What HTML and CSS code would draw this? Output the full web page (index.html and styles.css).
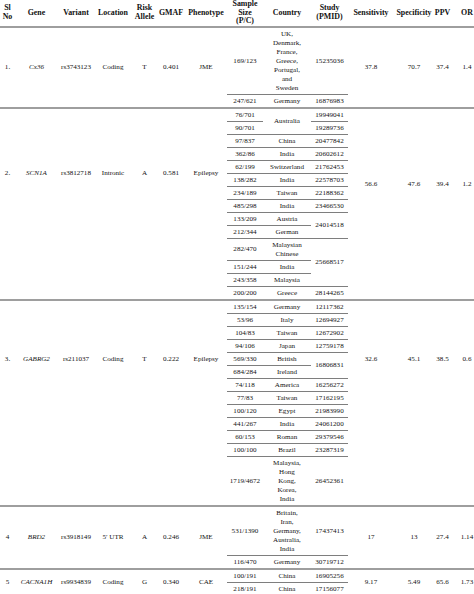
FILE: index.html
```html
<!DOCTYPE html>
<html>
<head>
<meta charset="utf-8">
<title>Table</title>
<link rel="stylesheet" href="styles.css">
</head>
<body>
<table class="t">
<colgroup>
<col class="c-sl"><col class="c-gene"><col class="c-var"><col class="c-loc"><col class="c-risk"><col class="c-gmaf"><col class="c-phen"><col class="c-samp"><col class="c-cty"><col class="c-study"><col class="c-sens"><col class="c-spec"><col class="c-ppv"><col class="c-or">
</colgroup>
<thead>
<tr>
<th>Sl<br>No</th><th>Gene</th><th>Variant</th><th>Location</th><th>Risk<br>Allele</th><th>GMAF</th><th>Phenotype</th><th>Sample<br>Size<br>(P/C)</th><th>Country</th><th>Study<br>(PMID)</th><th>Sensitivity</th><th>Specificity</th><th>PPV</th><th>OR</th>
</tr>
</thead>
<tbody>
<tr>
<td rowspan="2">1.</td><td rowspan="2" class="g">Cx36</td><td rowspan="2">rs3743123</td><td rowspan="2">Coding</td><td rowspan="2">T</td><td rowspan="2">0.401</td><td rowspan="2">JME</td>
<td class="s">169/123</td><td class="s">UK,<br>Denmark,<br>France,<br>Greece,<br>Portugal,<br>and<br>Sweden</td><td class="s">15235036</td>
<td rowspan="2">37.8</td><td rowspan="2">70.7</td><td rowspan="2">37.4</td><td rowspan="2">1.4</td>
</tr>
<tr><td class="s">247/621</td><td class="s">Germany</td><td class="s">16876983</td></tr>
</tbody>
<tbody>
<tr>
<td rowspan="10">2.</td><td rowspan="10" class="g">SCN1A</td><td rowspan="10">rs3812718</td><td rowspan="10">Intronic</td><td rowspan="10">A</td><td rowspan="10">0.581</td><td rowspan="10">Epilepsy</td>
<td class="s">76/701</td><td class="s" rowspan="2">Australia</td><td class="s">19949041</td>
<td rowspan="11">56.6</td><td rowspan="11">47.6</td><td rowspan="11">39.4</td><td rowspan="11">1.2</td>
</tr>
<tr><td class="s">90/701</td><td class="s">19289736</td></tr>
<tr><td class="s">97/837</td><td class="s">China</td><td class="s">20477842</td></tr>
<tr><td class="s">362/86</td><td class="s">India</td><td class="s">20602612</td></tr>
<tr><td class="s">62/199</td><td class="s">Switzerland</td><td class="s">21762453</td></tr>
<tr><td class="s">138/282</td><td class="s">India</td><td class="s">22578703</td></tr>
<tr><td class="s">234/189</td><td class="s">Taiwan</td><td class="s">22188362</td></tr>
<tr><td class="s">485/298</td><td class="s">India</td><td class="s">23466530</td></tr>
<tr><td class="s">133/209</td><td class="s">Austria</td><td class="s" rowspan="2">24014518</td></tr>
<tr><td class="s">212/344</td><td class="s">German</td></tr>
<tr><td colspan="7" rowspan="4"></td><td class="s">282/470</td><td class="s">Malaysian<br>Chinese</td><td class="s" rowspan="3">25668517</td></tr>
<tr><td class="s">151/244</td><td class="s">India</td><td colspan="4" rowspan="3"></td></tr>
<tr><td class="s">243/358</td><td class="s">Malaysia</td></tr>
<tr><td class="s">200/200</td><td class="s">Greece</td><td class="s">28144265</td></tr>
</tbody>
<tbody>
<tr>
<td rowspan="9">3.</td><td rowspan="9" class="g">GABRG2</td><td rowspan="9">rs211037</td><td rowspan="9">Coding</td><td rowspan="9">T</td><td rowspan="9">0.222</td><td rowspan="9">Epilepsy</td>
<td class="s">135/154</td><td class="s">Germany</td><td class="s">12117362</td>
<td rowspan="9">32.6</td><td rowspan="9">45.1</td><td rowspan="9">38.5</td><td rowspan="9">0.6</td>
</tr>
<tr><td class="s">53/96</td><td class="s">Italy</td><td class="s">12694927</td></tr>
<tr><td class="s">104/83</td><td class="s">Taiwan</td><td class="s">12672902</td></tr>
<tr><td class="s">94/106</td><td class="s">Japan</td><td class="s">12759178</td></tr>
<tr><td class="s">569/330</td><td class="s">British</td><td class="s" rowspan="2">16806831</td></tr>
<tr><td class="s">684/284</td><td class="s">Ireland</td></tr>
<tr><td class="s">74/118</td><td class="s">America</td><td class="s">16256272</td></tr>
<tr><td class="s">77/83</td><td class="s">Taiwan</td><td class="s">17162195</td></tr>
<tr><td class="s">100/120</td><td class="s">Egypt</td><td class="s">21983990</td></tr>
<tr><td colspan="7" rowspan="4"></td><td class="s">441/267</td><td class="s">India</td><td class="s">24061200</td><td colspan="4" rowspan="4"></td></tr>
<tr><td class="s">60/153</td><td class="s">Roman</td><td class="s">29379546</td></tr>
<tr><td class="s">100/100</td><td class="s">Brazil</td><td class="s">23287319</td></tr>
<tr><td class="s">1719/4672</td><td class="s">Malaysia,<br>Hong<br>Kong,<br>Korea,<br>India</td><td class="s">26452361</td></tr>
</tbody>
<tbody>
<tr>
<td rowspan="2">4</td><td rowspan="2" class="g">BRD2</td><td rowspan="2">rs3918149</td><td rowspan="2">5′ UTR</td><td rowspan="2">A</td><td rowspan="2">0.246</td><td rowspan="2">JME</td>
<td class="s">531/1390</td><td class="s">Britain,<br>Iran,<br>Germany,<br>Australia,<br>India</td><td class="s">17437413</td>
<td rowspan="2">17</td><td rowspan="2">13</td><td rowspan="2">27.4</td><td rowspan="2">1.14</td>
</tr>
<tr><td class="s">116/470</td><td class="s">Germany</td><td class="s">30719712</td></tr>
</tbody>
<tbody>
<tr>
<td rowspan="2">5</td><td rowspan="2" class="g">CACNA1H</td><td rowspan="2">rs9934839</td><td rowspan="2">Coding</td><td rowspan="2">G</td><td rowspan="2">0.340</td><td rowspan="2">CAE</td>
<td class="s">100/191</td><td class="s">China</td><td class="s">16905256</td>
<td rowspan="2">9.17</td><td rowspan="2">5.49</td><td rowspan="2">65.6</td><td rowspan="2">1.73</td>
</tr>
<tr><td class="s">218/191</td><td class="s">China</td><td class="s">17156077</td></tr>
</tbody>
</table>
</body>
</html>
```

FILE: styles.css
```css
html, body {
  margin: 0;
  padding: 0;
  overflow: hidden;
  background: #fff;
}

.t {
  border-collapse: collapse;
  table-layout: fixed;
  width: 483px;
  font-family: "Liberation Serif", "Times New Roman", serif;
  font-size: 7.1px;
  color: #141414;
}

.c-sl { width: 15px; }
.c-gene { width: 43px; }
.c-var { width: 36px; }
.c-loc { width: 38px; }
.c-risk { width: 25px; }
.c-gmaf { width: 28px; }
.c-phen { width: 42px; }
.c-samp { width: 36px; }
.c-cty { width: 48px; }
.c-study { width: 37px; }
.c-sens { width: 46px; }
.c-spec { width: 40px; }
.c-ppv { width: 17px; }
.c-or { width: 32px; }

.t th {
  font-weight: bold;
  font-size: 7.9px;
  line-height: 8.7px;
  padding: 0;
  text-align: center;
  vertical-align: middle;
  white-space: nowrap;
  color: #111;
}

.t td {
  line-height: 9px;
  padding: 1.5px 0;
  text-align: center;
  vertical-align: middle;
  white-space: nowrap;
}

.t thead,
.t tbody {
  border-bottom: 2px solid #9e9e9e;
}

.t td.s {
  border-bottom: 1px solid #7e7e7e;
}

.g {
  font-style: italic;
}
```
